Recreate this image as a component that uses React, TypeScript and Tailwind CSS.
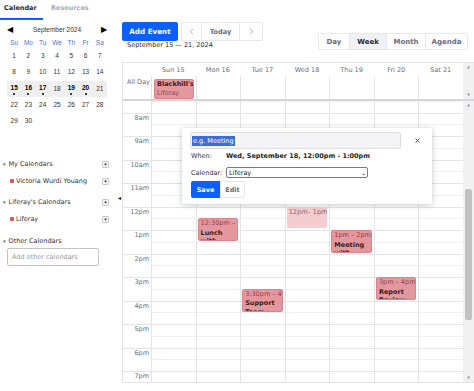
import { ChevronLeft, ChevronRight, X } from 'lucide-react';

const HOUR = 23.5;

const hours = ['7am', '8am', '9am', '10am', '11am', '12pm', '1pm', '2pm', '3pm', '4pm', '5pm', '6pm', '7pm'];
const weekDays = ['Sun 15', 'Mon 16', 'Tue 17', 'Wed 18', 'Thu 19', 'Fri 20', 'Sat 21'];
const dayNames = ['Su', 'Mo', 'Tu', 'We', 'Th', 'Fr', 'Sa'];
const weeks = [
    [1, 2, 3, 4, 5, 6, 7],
    [8, 9, 10, 11, 12, 13, 14],
    [15, 16, 17, 18, 19, 20, 21],
    [22, 23, 24, 25, 26, 27, 28],
    [29, 30],
];
const busyDays = [15, 16, 17, 19, 20];

interface CalEvent {
    day: number;
    start: number;
    h: number;
    time: string;
    title?: string;
    light?: boolean;
}

const events: CalEvent[] = [
    { day: 1, start: 12.5, h: 23, time: '12:30pm – 1:30pm', title: 'Lunch with Partners' },
    { day: 3, start: 12, h: 21.5, time: '12pm– 1pm', light: true },
    { day: 4, start: 13, h: 23, time: '1pm – 2pm', title: 'Meeting with Sales' },
    { day: 2, start: 15.5, h: 23, time: '3:30pm – 4:30pm', title: 'Support Team Sync' },
    { day: 5, start: 15, h: 23, time: '3pm – 4pm', title: 'Report Review' },
];

const MiniCalendar = () => (
    <div className="ml-[7px] mt-[4px] w-[100px] font-['Liberation_Sans',Arial,sans-serif] text-[6.5px] text-[#333]">
        {/* 月份切换 */}
        <div className="flex h-[11px] items-center justify-between">
            <span className="text-[8px] leading-none text-black">◀</span>
            <span>September 2024</span>
            <span className="text-[8px] leading-none text-black">▶</span>
        </div>
        <div className="mt-[3px] grid h-[10px] grid-cols-7 items-center text-center text-[#4a74d6]">
            {dayNames.map((d) => (
                <span key={d}>{d}</span>
            ))}
        </div>
        {weeks.map((week, i) => (
            <div key={i} className={`grid h-[16.3px] grid-cols-7 items-center text-center ${i === 2 ? 'bg-[#efefef]' : ''}`}>
                {week.map((n) => (
                    <div key={n} className="flex flex-col items-center">
                        {busyDays.includes(n) ? (
                            <>
                                <span className="mt-[1px] font-bold leading-[8px] text-black">{n}</span>
                                <span className="mt-[1px] h-[2px] w-[2px] rounded-full bg-black"></span>
                            </>
                        ) : (
                            <span>{n}</span>
                        )}
                    </div>
                ))}
            </div>
        ))}
    </div>
);

const Dropper = () => (
    <div className="flex h-[7px] w-[7px] items-center justify-center rounded-[1px] border border-[#c9c9c9] bg-[#f7f7f7] text-[5px] leading-none text-[#333]">
        ▾
    </div>
);

const Sidebar = () => (
    <aside className="w-[118px] shrink-0">
        {/* 标签页 */}
        <div className="flex h-[20px] leading-[10px]">
            <div className="w-[43px] border-b-2 border-[#0b5fff] pl-[4px] pt-[3px] font-bold text-[#272833]">Calendar</div>
            <div className="pl-[8px] pt-[3px] font-bold text-[#a7a9bc]">Resources</div>
        </div>

        <MiniCalendar />

        {/* 日历列表 */}
        <div className="mt-[28px] pr-[9px] text-[#333]">
            <div className="flex h-[14px] items-center justify-between">
                <span className="flex items-center gap-[3px] pl-[3px]">
                    <span className="text-[5px] text-[#555]">▾</span>My Calendars
                </span>
                <Dropper />
            </div>
            <div className="mt-[3px] flex h-[14px] items-center justify-between">
                <span className="flex items-center gap-[2px] pl-[10px]">
                    <span className="h-[4px] w-[4px] rounded-[1px] bg-[#e0525e]"></span>Victoria Wurdi Youang
                </span>
                <Dropper />
            </div>
            <div className="mt-[7px] flex h-[14px] items-center justify-between">
                <span className="flex items-center gap-[3px] pl-[3px]">
                    <span className="text-[5px] text-[#555]">▾</span>Liferay's Calendars
                </span>
                <Dropper />
            </div>
            <div className="mt-[3px] flex h-[14px] items-center justify-between">
                <span className="flex items-center gap-[2px] pl-[10px]">
                    <span className="h-[4px] w-[4px] rounded-[1px] bg-[#e0525e]"></span>Liferay
                </span>
                <Dropper />
            </div>
            <div className="mt-[8px] flex h-[14px] items-center">
                <span className="flex items-center gap-[3px] pl-[3px]">
                    <span className="text-[5px] text-[#555]">▾</span>Other Calendars
                </span>
            </div>
            <div className="ml-[7px] mt-[0px] flex h-[18px] w-[92px] items-center rounded-[2px] border border-[#c4c4c4] pl-[4px] text-[#9a9a9a]">
                Add other calendars
            </div>
        </div>
    </aside>
);

const ScrollTrack = ({ thumbTop, thumbH }: { thumbTop?: number; thumbH?: number }) => (
    <div className="flex w-[11px] shrink-0 flex-col items-center bg-[#f1f1f1] text-[4px] leading-none text-[#a3a3a3]">
        <span className="mt-[2px]">▲</span>
        {thumbH ? (
            <div className="w-[7px] rounded-[2px] bg-[#c1c1c1]" style={{ marginTop: thumbTop, height: thumbH }}></div>
        ) : null}
        <div className="flex-1"></div>
        <span className="mb-[2px]">▼</span>
    </div>
);

const EventBox = ({ ev }: { ev: CalEvent }) => (
    <div
        className={`absolute left-[1px] right-[2px] overflow-hidden rounded-[2px] px-[2px] leading-[8.5px] ${ev.light
            ? 'bg-[#f4cdd0] pt-[1px] text-[#a0585e]'
            : 'border border-[#d98289] bg-[#e4979c] text-[#96414a]'
            }`}
        style={{ top: (ev.start - 7) * HOUR, height: ev.h }}
    >
        <div className="whitespace-nowrap">{ev.time}</div>
        {ev.title && <div className="mt-[1px] font-bold text-[#3a1a1d]">{ev.title}</div>}
    </div>
);

const Popup = () => (
    <div className="absolute left-[182px] top-[128px] h-[76px] w-[250px] bg-white pl-[8px] pt-[4px] shadow-[0_1px_6px_rgba(0,0,0,0.22)]">
        <div className="flex items-center">
            <div className="flex h-[17px] w-[211px] items-center rounded-[2px] border border-[#dcdce2] bg-[#f4f4f6] pl-[1px]">
                <span className="bg-[#3b6ed4] px-[1px] leading-[10px] text-white">e.g. Meeting</span>
            </div>
            <X className="ml-[13px] text-[#333]" size={7} strokeWidth={2.5} />
        </div>
        <div className="mt-[1px] flex h-[12px] items-center">
            <span className="ml-[1px] w-[35px] text-[#333]">When:</span>
            <span className="font-bold text-[#222]">Wed, September 18, 12:00pm - 1:00pm</span>
        </div>
        <div className="mt-[5px] flex h-[11px] items-center">
            <span className="ml-[1px] w-[35px] text-[#333]">Calendar:</span>
            <div className="flex h-[11px] w-[142px] items-center justify-between rounded-[2px] border border-[#7a7a7a] pl-[2px] pr-[1px] text-[#222]">
                <span>Liferay</span>
                <span className="text-[6px] font-bold leading-none">⌄</span>
            </div>
        </div>
        <div className="ml-[1px] mt-[3px] flex h-[17px]">
            <div className="flex w-[29px] items-center justify-center rounded-l-[2px] bg-[#0b5fff] font-bold text-white">Save</div>
            <div className="flex w-[25px] items-center justify-center rounded-r-[2px] border border-[#e7e7ed] font-bold text-[#6b6c7e]">Edit</div>
        </div>
    </div>
);

const WeekGrid = () => (
    <div className="mt-[12px] border-b border-l border-t border-[#e4e4e8]">
        {/* 表头 + 全天 */}
        <div className="flex border-b-2 border-[#d6d6da]">
            <div className="flex-1">
                <div className="flex h-[13px] items-center text-[#6b6c7e]">
                    <div className="w-[28px]"></div>
                    {weekDays.map((d) => (
                        <div key={d} className="flex-1 text-center">{d}</div>
                    ))}
                </div>
                <div className="flex h-[23px]">
                    <div className="w-[28px] pl-[4px] pt-[1px] text-[#6b6c7e]">All Day</div>
                    {weekDays.map((d, i) => (
                        <div key={d} className="relative flex-1 border-l border-[#e4e4e8]">
                            {i === 0 && (
                                <div className="absolute bottom-0 left-[2px] right-[2px] top-[3px] overflow-hidden rounded-[2px] border border-[#d98289] bg-[#e4979c] px-[2px] leading-[9px]">
                                    <div className="whitespace-nowrap font-bold text-[#3a1a1d]">Blackhill's Inc</div>
                                    <div className="text-[#96414a]">Liferay</div>
                                </div>
                            )}
                        </div>
                    ))}
                </div>
            </div>
            <ScrollTrack />
        </div>

        {/* 时间格 */}
        <div className="flex h-[281px] overflow-hidden">
            <div className="flex-1 overflow-hidden">
                <div className="-mt-[12px] flex">
                    <div className="w-[28px]">
                        {hours.map((h) => (
                            <div key={h} className="h-[23.5px] border-t border-[#e4e4e8] pr-[2px] text-right leading-[8px] text-[#6b6c7e]">
                                {h}
                            </div>
                        ))}
                    </div>
                    {weekDays.map((d, i) => (
                        <div key={d} className="relative flex-1 border-l border-[#e4e4e8]">
                            {hours.map((h) => (
                                <div key={h} className="h-[23.5px] border-t border-[#e4e4e8]">
                                    <div className="h-[11.5px] border-b border-[#f0f0f3]"></div>
                                </div>
                            ))}
                            {events
                                .filter((ev) => ev.day === i)
                                .map((ev) => (
                                    <EventBox key={ev.time} ev={ev} />
                                ))}
                        </div>
                    ))}
                </div>
            </div>
            <ScrollTrack thumbTop={82} thumbH={131} />
        </div>
    </div>
);

export default function App() {
    return (
        <div className="relative flex h-[391px] w-[474px] overflow-hidden bg-white font-['DejaVu_Sans',sans-serif] text-[6.5px] leading-[10px]">
            <Sidebar />

            {/* 收起按钮 */}
            <div className="w-[4px] shrink-0 pt-[195px] text-[6px] leading-none text-black">◂</div>

            <main className="flex-1 pt-[22px]">
                {/* 工具栏 */}
                <div className="flex h-[28px] items-start justify-between pr-[6px]">
                    <div>
                        <div className="flex h-[19px]">
                            <button className="w-[56px] rounded-[2px] bg-[#0b5fff] text-[7.2px] font-bold text-white">Add Event</button>
                            <div className="ml-[3px] flex rounded-[2px] border border-[#e7e7ed] text-[#6b6c7e]">
                                <div className="flex w-[20px] items-center justify-center border-r border-[#e7e7ed]">
                                    <ChevronLeft size={9} strokeWidth={1.5} />
                                </div>
                                <div className="flex w-[38px] items-center justify-center border-r border-[#e7e7ed] text-[6.7px] font-bold">Today</div>
                                <div className="flex w-[22px] items-center justify-center">
                                    <ChevronRight size={9} strokeWidth={1.5} />
                                </div>
                            </div>
                        </div>
                        <div className="h-[8px] pl-[5px] leading-[8px] text-[#272833]">September 15 — 21, 2024</div>
                    </div>
                    <div className="mt-[11px] flex h-[17px] rounded-[2px] border border-[#e7e7ed] text-[7px] font-bold text-[#6b6c7e]">
                        <div className="flex w-[30px] items-center justify-center">Day</div>
                        <div className="flex w-[37px] items-center justify-center border-l border-[#e7e7ed] bg-[#f1f2f5] text-[#272833]">Week</div>
                        <div className="flex w-[39px] items-center justify-center border-l border-[#e7e7ed]">Month</div>
                        <div className="flex w-[42px] items-center justify-center border-l border-[#e7e7ed]">Agenda</div>
                    </div>
                </div>

                <WeekGrid />
            </main>

            <Popup />
        </div>
    );
}
